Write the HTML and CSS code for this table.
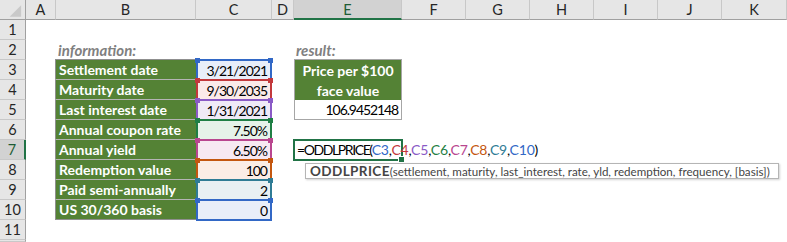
FILE: index.html
```html
<!DOCTYPE html>
<html>
<head>
<meta charset="utf-8">
<link rel="stylesheet" href="styles.css">
</head>
<body>
<div class="sheet">
  <div class="ch corner"><svg width="26" height="20" viewBox="0 0 26 20"><polygon points="22,5 22,17 10,17" fill="#c9c9c9"/></svg></div>
  <div class="ch">A</div>
  <div class="ch">B</div>
  <div class="ch">C</div>
  <div class="ch">D</div>
  <div class="ch sel-col">E</div>
  <div class="ch">F</div>
  <div class="ch">G</div>
  <div class="ch">H</div>
  <div class="ch">I</div>
  <div class="ch">J</div>
  <div class="ch last">K</div>

  <div class="rh">1</div>
  <div class="rh">2</div>
  <div class="rh">3</div>
  <div class="rh">4</div>
  <div class="rh">5</div>
  <div class="rh">6</div>
  <div class="rh sel-row">7</div>
  <div class="rh">8</div>
  <div class="rh">9</div>
  <div class="rh">10</div>
  <div class="rh">11</div>
  <div class="rh"></div>

  <div class="cell colB r2 caption">information:</div>
  <div class="cell colE r2 caption">result:</div>

  <div class="cell colB r3 lbl first">Settlement date</div>
  <div class="cell colB r4 lbl">Maturity date</div>
  <div class="cell colB r5 lbl">Last interest date</div>
  <div class="cell colB r6 lbl">Annual coupon rate</div>
  <div class="cell colB r7 lbl">Annual yield</div>
  <div class="cell colB r8 lbl">Redemption value</div>
  <div class="cell colB r9 lbl">Paid semi-annually</div>
  <div class="cell colB r10 lbl lastrow">US 30/360 basis</div>

  <div class="cell colC r3 val ref ref-blue">3/21/2021</div>
  <div class="cell colC r4 val ref ref-red">9/30/2035</div>
  <div class="cell colC r5 val ref ref-purple">1/31/2021</div>
  <div class="cell colC r6 val ref ref-green">7.50%</div>
  <div class="cell colC r7 val ref ref-pink">6.50%</div>
  <div class="cell colC r8 val ref ref-orange">100</div>
  <div class="cell colC r9 val ref ref-teal">2</div>
  <div class="cell colC r10 val ref ref-blue ref-end">0</div>

  <div class="cell colE r3 result-head">Price per $100<br>face value</div>
  <div class="cell colE r5 result-val">106.9452148</div>

  <div class="cell colE r7 active">
    <span class="formula"><span class="fn">=ODDLPRICE(</span><span class="t-blue">C3</span>,<span class="t-red">C4</span>,<span class="t-purple">C5</span>,<span class="t-green">C6</span>,<span class="t-pink">C7</span>,<span class="t-orange">C8</span>,<span class="t-teal">C9</span>,<span class="t-blue">C10</span>)</span>
    <span class="fill-handle"></span>
  </div>

  <div class="tooltip"><b>ODDLPRICE</b>(settlement, maturity, last_interest, rate, yld, redemption, frequency, [basis])</div>
</div>
</body>
</html>
```

FILE: styles.css
```css
html, body {
  margin: 0;
  padding: 0;
  background: #ffffff;
}

.sheet {
  position: relative;
  display: grid;
  grid-template-columns: 26px 30px 140px 76px 22px 108px 64px 64px 64px 64px 64px 65px;
  grid-template-rows: 20px repeat(11, 20px) 2px;
  width: 787px;
  height: 242px;
  overflow: hidden;
  font-family: Lato, "Liberation Sans", sans-serif;
  font-size: 14px;
  color: #000;
}

.ch {
  box-sizing: border-box;
  background: #e6e6e6;
  border-right: 1px solid #c8c8c8;
  border-bottom: 1px solid #a0a0a0;
  display: flex;
  align-items: center;
  justify-content: center;
  font-size: 14.5px;
  color: #262626;
}

.ch.corner {
  border-right: 1px solid #a0a0a0;
}

.ch.corner svg {
  display: block;
}

.ch.sel-col {
  background: #d2d2d2;
  border-bottom: 2px solid #217346;
  color: #1e5c35;
}

.rh {
  grid-column: 1;
  box-sizing: border-box;
  background: #e6e6e6;
  border-right: 1px solid #a0a0a0;
  border-bottom: 1px solid #c8c8c8;
  display: flex;
  align-items: center;
  justify-content: center;
  font-size: 14.5px;
  color: #262626;
}

.rh.sel-row {
  background: #d2d2d2;
  border-right: 2px solid #217346;
  color: #1e5c35;
}

.cell {
  box-sizing: border-box;
  white-space: nowrap;
  line-height: 20px;
}

.colB { grid-column: 3; }
.colC { grid-column: 4; }
.colE { grid-column: 6; }

.r2 { grid-row: 3; }
.r3 { grid-row: 4; }
.r4 { grid-row: 5; }
.r5 { grid-row: 6; }
.r6 { grid-row: 7; }
.r7 { grid-row: 8; }
.r8 { grid-row: 9; }
.r9 { grid-row: 10; }
.r10 { grid-row: 11; }

.caption {
  font-style: italic;
  font-weight: 700;
  font-size: 15px;
  color: #808080;
  padding-left: 2px;
  line-height: 21px;
}

.lbl {
  background: #548235;
  color: #ffffff;
  font-weight: 700;
  padding-left: 3px;
  border-left: 1px solid #8f8f8f;
  border-bottom: 1px solid #b4b4b4;
  margin-left: -1px;
  line-height: 20px;
}

.lbl.first {
  border-top: 1px solid #8f8f8f;
  margin-top: -1px;
}

.lbl.lastrow {
  border-bottom: 1px solid #8f8f8f;
}

.val {
  position: relative;
  text-align: right;
  padding-right: 3px;
  border-top: 2px solid;
  border-left: 2px solid;
  border-right: 2px solid;
  margin-top: -1px;
  height: 21px;
  line-height: 19px;
  letter-spacing: -1px;
  color: #000;
}

.ref::before,
.ref::after {
  content: "";
  position: absolute;
  top: -3px;
  width: 5px;
  height: 5px;
}

.ref::before { left: -3px; }
.ref::after { right: -3px; }

.ref-blue { border-color: #3268c6; background: #e8eef9; }
.ref-red { border-color: #c3383c; background: #fbeae9; }
.ref-purple { border-color: #8a5ac6; background: #efeaf7; }
.ref-green { border-color: #1f7f45; background: #e6f2e9; }
.ref-pink { border-color: #b9468f; background: #f7e9f2; }
.ref-orange { border-color: #c4570f; background: #fbede5; }
.ref-teal { border-color: #2f7c95; background: #e8f0f3; }

.ref-blue::before, .ref-blue::after { background: #3268c6; }
.ref-red::before, .ref-red::after { background: #c3383c; }
.ref-purple::before, .ref-purple::after { background: #8a5ac6; }
.ref-green::before, .ref-green::after { background: #1f7f45; }
.ref-pink::before, .ref-pink::after { background: #b9468f; }
.ref-orange::before, .ref-orange::after { background: #c4570f; }
.ref-teal::before, .ref-teal::after { background: #2f7c95; }

.ref-end {
  border-bottom: 2px solid #3268c6;
  height: 22px;
}

.result-head {
  grid-row: 4 / span 2;
  background: #548235;
  color: #ffffff;
  font-weight: 700;
  text-align: center;
  border: 1px solid #a6a6a6;
  border-bottom: none;
  margin: -1px 0 0 0;
  white-space: normal;
  line-height: 20px;
  padding-top: 1px;
}

.result-val {
  text-align: right;
  padding-right: 3px;
  border: 1px solid #a6a6a6;
  border-top: none;
  line-height: 19px;
  letter-spacing: -1.1px;
}

.active {
  position: relative;
  border: 2px solid #217346;
  margin: -1px -1px 0 -1px;
  height: 22px;
  overflow: visible;
  line-height: 18px;
}

.formula {
  position: relative;
  padding-left: 2px;
  letter-spacing: -0.2px;
  color: #000;
}

.formula .fn {
  letter-spacing: -1.4px;
}

.fill-handle {
  position: absolute;
  right: -4px;
  bottom: -4px;
  width: 5px;
  height: 5px;
  background: #217346;
  border: 1px solid #ffffff;
}

.t-blue { color: #3268c6; }
.t-red { color: #c3383c; }
.t-purple { color: #8a5ac6; }
.t-green { color: #1f7f45; }
.t-pink { color: #b9468f; }
.t-orange { color: #c4570f; }
.t-teal { color: #2f7c95; }

.tooltip {
  position: absolute;
  left: 305px;
  top: 163px;
  width: 474px;
  height: 16px;
  box-sizing: border-box;
  background: #ffffff;
  border: 1px solid #b5b5b5;
  box-shadow: 1px 1px 2px rgba(0, 0, 0, 0.18);
  font-family: Lato, "Liberation Sans", sans-serif;
  font-size: 11.6px;
  line-height: 14px;
  color: #444;
  padding-left: 4px;
  white-space: nowrap;
}

.tooltip b {
  font-weight: 700;
  font-size: 13.5px;
  letter-spacing: 0.4px;
  color: #444;
}
```
